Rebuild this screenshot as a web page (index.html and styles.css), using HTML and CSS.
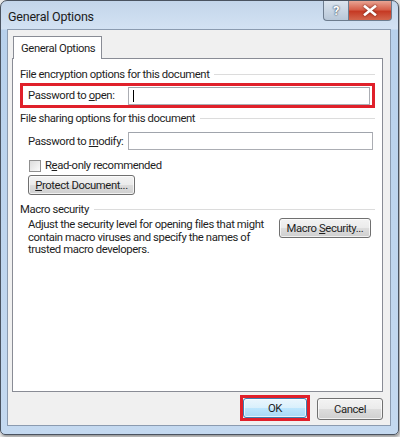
FILE: index.html
```html
<!DOCTYPE html>
<html>
<head>
<meta charset="utf-8">
<link rel="stylesheet" href="styles.css">
</head>
<body>
<div class="window">
  <div class="titlebar">
    <div class="title">General Options</div>
    <div class="controls">
      <div class="ctl help">?</div>
      <div class="ctl close">
        <svg width="14" height="11" viewBox="0 0 14 11"><path d="M2 1.5 L12 9.5 M12 1.5 L2 9.5" stroke="#fff" stroke-width="2.6" stroke-linecap="square"/></svg>
      </div>
    </div>
  </div>
  <div class="client">
    <div class="tabs"><div class="tab">General Options</div></div>
    <div class="panel">
      <div class="section"><span class="sec-title">File encryption options for this document</span><span class="rule"></span></div>
      <div class="highlight">
        <div class="field"><span class="label">Password to <u>o</u>pen:</span><span class="input"><span class="caret"></span></span></div>
      </div>
      <div class="section s2"><span class="sec-title">File sharing options for this document</span><span class="rule"></span></div>
      <div class="field f2"><span class="label">Password to <u>m</u>odify:</span><span class="input"></span></div>
      <div class="check"><span class="box"></span><span>R<u>e</u>ad-only recommended</span></div>
      <div class="btn protect"><span><u>P</u>rotect Document...</span></div>
      <div class="section s3"><span class="sec-title">Macro security</span><span class="rule"></span></div>
      <div class="macro">
        <p class="desc">Adjust the security level for opening files that might contain macro viruses and specify the names of trusted macro developers.</p>
        <div class="btn macro-btn"><span>Macro <u>S</u>ecurity...</span></div>
      </div>
    </div>
    <div class="footer">
      <div class="ok-wrap"><div class="btn dlg"><span>OK</span></div></div>
      <div class="btn dlg"><span>Cancel</span></div>
    </div>
  </div>
</div>
</body>
</html>
```
FILE: styles.css
```css
* { box-sizing: border-box; }
html, body { margin: 0; padding: 0; }
body {
  width: 400px; height: 437px; overflow: hidden;
  background: #e9e9e9;
  font-family: Roboto, "Noto Sans", sans-serif;
  font-size: 11.3px;
  letter-spacing: -0.4px;
  color: #1e1e1e;
  white-space: nowrap;
}
.window {
  width: 399px; height: 435px;
  border: 1px solid #4a5360;
  border-radius: 7px 7px 5px 5px;
  background: linear-gradient(to bottom, #c3d5ea 0px, #d3e2f3 28px, #b8d1ec 29px, #c4d9f0 100%);
  padding: 0 7px 8px 6px;
  display: flex; flex-direction: column;
  box-shadow: 1px 2px 3px rgba(0,0,0,0.35);
}
.titlebar {
  height: 28px;
  display: flex; align-items: flex-start;
  flex: none;
}
.title {
  padding: 8px 0 0 1px;
  font-size: 12.5px;
  letter-spacing: -0.2px;
  color: #1b1b1b;
}
.controls { margin-left: auto; display: flex; margin-right: -1px; }
.ctl {
  height: 20px;
  border: 1px solid #6d7c8e;
  border-top: none;
  display: flex; align-items: center; justify-content: center;
}
.help {
  width: 25px;
  border-radius: 0 0 0 4px;
  background: linear-gradient(to bottom, #dbe4ee, #b8c7d8);
  color: #fff; font-weight: bold; font-size: 13px;
  text-shadow: 0 0 2px #34475e, 0 0 1px #34475e;
  border-right: none;
}
.close {
  width: 44px;
  border-radius: 0 0 4px 0;
  background: linear-gradient(to bottom, #e8a493 0%, #d6604b 45%, #c63a24 55%, #d3664d 100%);
}
.close svg { filter: drop-shadow(0 0 1px #6b1a0f); }
.client {
  flex: 1;
  background: #f0f0f0;
  border: 1px solid #8b9bb0;
  display: flex; flex-direction: column;
  padding: 6px 7px 0 4px;
}
.tabs { display: flex; padding-left: 1px; height: 22px; flex: none; position: relative; z-index: 1; }
.tab {
  width: 89px; height: 23px;
  border: 1px solid #898c95; border-bottom: none;
  background: #fff;
  padding: 5px 0 0 7px;
}
.panel {
  height: 334px;
  background: #fff;
  border: 1px solid #898c95;
  padding: 0 7px 0 7px;
  flex: none;
}
.section {
  display: flex; align-items: center;
  height: 14px;
  margin-top: 8px;
}
.section .rule { flex: 1; height: 1px; background: #dcdcdc; margin: 1px 0 0 5px; }
.s2 { margin-top: 3px; }
.s3 { margin-top: 7px; }
.highlight {
  margin-top: 2px;
  height: 25px;
  border: 3px solid #e0202a;
  padding: 0 2px 0 5px;
  display: flex; align-items: center;
}
.field { display: flex; align-items: center; width: 100%; }
.label { width: 100px; flex: none; }
.input {
  flex: 1; height: 18px;
  border: 1px solid #abadb3;
  border-top-color: #a0a4ac;
  background: #fff;
  display: flex; align-items: center;
  padding-left: 4px;
}
.caret { width: 1px; height: 12px; background: #000; }
.f2 { margin-top: 7px; padding: 0 2px 0 8px; }
.check { display: flex; align-items: center; margin: 9px 0 0 9px; height: 13px; gap: 4px; }
.box {
  width: 12px; height: 12px;
  border: 1px solid #8f8f8f;
  background: linear-gradient(135deg, #dcdcdc, #fbfbfb);
}
.btn {
  border: 1px solid #707070;
  border-radius: 3px;
  background: linear-gradient(to bottom, #f3f3f3 0%, #ebebeb 49%, #dddddd 50%, #cfcfcf 100%);
  display: flex; align-items: center; justify-content: center;
  box-shadow: inset 0 0 0 1px rgba(255,255,255,0.7);
}
.protect { width: 107px; height: 20px; margin: 3px 0 0 8px; }
.macro { display: flex; padding-left: 8px; margin-top: 2px; }
.desc { margin: 0; width: 238px; line-height: 12.5px; margin-top: 1px; white-space: normal; }
.macro-btn { width: 92px; height: 20px; margin-left: 13px; }
.footer { display: flex; justify-content: flex-end; gap: 7px; padding-top: 6px; padding-right: 0; }
.ok-wrap { border: 3px solid #e0202a; padding: 0; margin: -3px 0 0 0; }
.dlg { width: 66px; height: 22px; }
.ok-wrap .dlg { width: 64px; height: 20px; border-color: #3c7fb1; background: linear-gradient(to bottom, #eaf6fd 0%, #d9f0fc 49%, #bee6fd 50%, #a7d9f5 100%); }
u { text-decoration: underline; text-underline-offset: 1px; }
```
